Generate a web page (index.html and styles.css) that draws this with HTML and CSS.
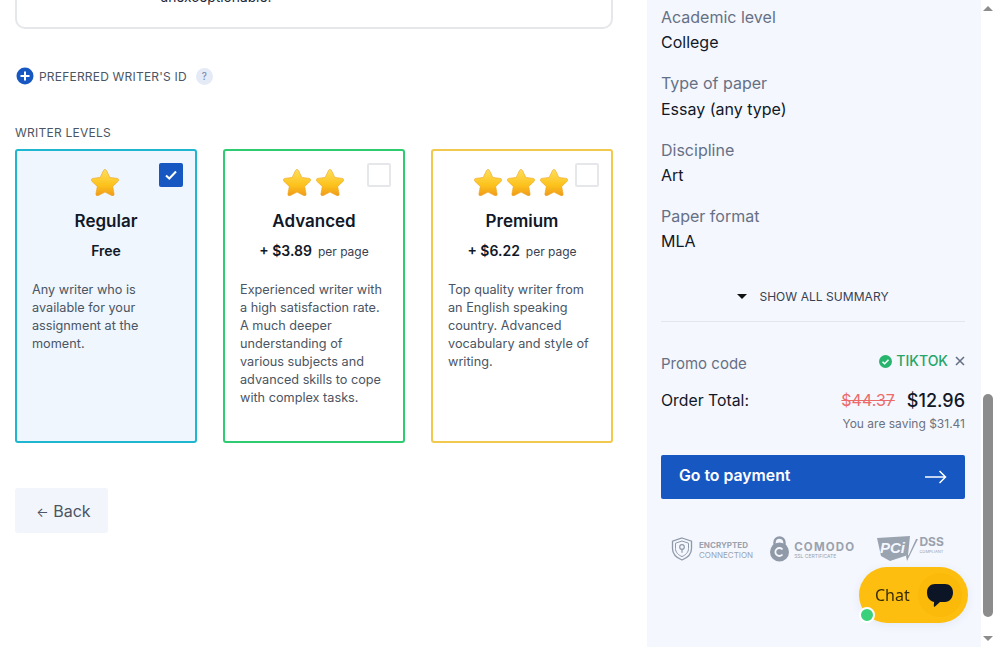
FILE: index.html
```html
<!DOCTYPE html>
<html lang="en">
<head>
    <meta charset="UTF-8">
    <title>Order</title>
    <link rel="stylesheet" href="styles.css">
</head>
<body>
    <svg width="0" height="0" class="defs">
        <defs>
            <linearGradient id="starFill" x1="0" y1="0" x2="0" y2="1">
                <stop offset="0" stop-color="#ffdf5c"/>
                <stop offset="0.6" stop-color="#fcc21b"/>
                <stop offset="1" stop-color="#f09a1a"/>
            </linearGradient>
            <symbol id="star" viewBox="0 0 28 28">
                <path d="M14 1.500c.7 0 1.200.4 1.500 1l3.300 6.900 7.500 1c1.400.2 1.900 1.900.9 2.800l-5.500 5.200 1.400 7.500c.2 1.400-1.200 2.400-2.400 1.700L14 24.100l-6.700 3.500c-1.200.7-2.600-.3-2.400-1.700l1.400-7.500L.8 13.200c-1-.9-.5-2.600.9-2.800l7.500-1 3.300-6.900c.3-.6.800-1 1.500-1z" fill="url(#starFill)" stroke="#eea11d" stroke-width=".6"/>
            </symbol>
        </defs>
    </svg>

    <div class="page">
        <main class="main">
            <div class="top-card"><p>unexceptionable.</p></div>

            <div class="writer-id">
                <span class="plus-icon">
                    <svg width="18" height="18" viewBox="0 0 18 18"><circle cx="9" cy="9" r="8.500" fill="#1757c2"/><path d="M9 4.500v9M4.500 9h9" stroke="#fff" stroke-width="2"/></svg>
                </span>
                <span>PREFERRED WRITER'S ID</span>
                <span class="help">?</span>
            </div>

            <h3 class="levels-title">WRITER LEVELS</h3>
            <div class="levels">
                <div class="level level-regular">
                    <span class="check checked">
                        <svg width="14" height="12" viewBox="0 0 14 12"><path d="M2 6.500l3.300 3L12 2.500" fill="none" stroke="#fff" stroke-width="2"/></svg>
                    </span>
                    <div class="stars"><svg class="star"><use href="#star"/></svg></div>
                    <h4>Regular</h4>
                    <div class="price"><b>Free</b></div>
                    <p>Any writer who is available for your assignment at the moment.</p>
                </div>
                <div class="level level-advanced">
                    <span class="check"></span>
                    <div class="stars"><svg class="star"><use href="#star"/></svg><svg class="star"><use href="#star"/></svg></div>
                    <h4>Advanced</h4>
                    <div class="price"><b>+ $3.89</b> <span>per page</span></div>
                    <p>Experienced writer with a high satisfaction rate. A much deeper understanding of various subjects and advanced skills to cope with complex tasks.</p>
                </div>
                <div class="level level-premium">
                    <span class="check"></span>
                    <div class="stars"><svg class="star"><use href="#star"/></svg><svg class="star"><use href="#star"/></svg><svg class="star"><use href="#star"/></svg></div>
                    <h4>Premium</h4>
                    <div class="price"><b>+ $6.22</b> <span>per page</span></div>
                    <p>Top quality writer from an English speaking country. Advanced vocabulary and style of writing.</p>
                </div>
            </div>

            <button class="back" type="button"><span class="back-arrow">←</span> Back</button>
        </main>

        <aside class="sidebar">
            <div class="summary">
                <div class="row"><div class="label">Academic level</div><div class="value">College</div></div>
                <div class="row"><div class="label">Type of paper</div><div class="value">Essay (any type)</div></div>
                <div class="row"><div class="label">Discipline</div><div class="value">Art</div></div>
                <div class="row"><div class="label">Paper format</div><div class="value">MLA</div></div>
            </div>

            <div class="show-all"><span class="caret"></span>SHOW ALL SUMMARY</div>

            <div class="promo">
                <span class="promo-label">Promo code</span>
                <span class="promo-code">
                    <svg width="13" height="13" viewBox="0 0 13 13"><circle cx="6.500" cy="6.500" r="6.500" fill="#27b56e"/><path d="M3.500 6.700l2.100 2 3.900-4" fill="none" stroke="#fff" stroke-width="1.500"/></svg>
                    TIKTOK
                    <svg class="promo-x" width="10" height="10" viewBox="0 0 10 10"><path d="M1 1l8 8M9 1l-8 8" stroke="#667085" stroke-width="1.600"/></svg>
                </span>
            </div>

            <div class="total">
                <span class="total-label">Order Total:</span>
                <span class="total-prices"><s>$44.37</s><b>$12.96</b></span>
            </div>
            <div class="saving">You are saving $31.41</div>

            <button class="pay" type="button">
                <span class="pay-text">Go to payment</span>
                <svg width="22" height="14" viewBox="0 0 22 14"><path d="M0 7h20.500M14.500 1l6 6-6 6" fill="none" stroke="#fff" stroke-width="1.500"/></svg>
            </button>

            <div class="badges">
                <div class="badge">
                    <svg width="22" height="24" viewBox="0 0 22 24"><path d="M11 1l9.500 3.200v7.300c0 5.500-4 9.300-9.500 11.500C5.500 20.800 1.500 17 1.500 11.500V4.200z" fill="none" stroke="#8f99a8" stroke-width="1.300"/><path d="M11 4l6.500 2.200v5.300c0 3.800-2.800 6.500-6.500 8.100-3.700-1.600-6.500-4.300-6.500-8.100V6.200z" fill="none" stroke="#8f99a8" stroke-width="1"/><circle cx="11" cy="10" r="2.300" fill="none" stroke="#8f99a8" stroke-width="1.200"/><path d="M11 12.300v3.500" stroke="#8f99a8" stroke-width="1.200"/></svg>
                    <div class="badge-text"><b>ENCRYPTED</b><span>CONNECTION</span></div>
                </div>
                <div class="badge comodo">
                    <svg width="21" height="26" viewBox="0 0 21 26"><path d="M5.500 10V6.500a5 5 0 0 1 10 0V10" fill="none" stroke="#8f99a8" stroke-width="2.400"/><circle cx="10.500" cy="16" r="9.500" fill="#8f99a8"/><path d="M13.500 13.500a4 4 0 1 0 0 5" fill="none" stroke="#f4f7fe" stroke-width="1.800"/></svg>
                    <div class="badge-text"><b>COMODO</b><span>SSL CERTIFICATE</span></div>
                </div>
                <div class="badge pci">
                    <svg width="42" height="26" viewBox="0 0 42 26"><path d="M0 2l33-2-2 19-18 6-9-5z" fill="#9aa3b0"/><path d="M41 3L30 25l-1-5 1.500-2 1 1.500L39 3z" fill="#9aa3b0"/><text x="3" y="17" class="pci-text">PCi</text></svg>
                    <div class="badge-text"><b>DSS</b><span>COMPLIANT</span></div>
                </div>
            </div>
        </aside>

        <div class="scrollbar">
            <span class="arrow-up"></span>
            <div class="thumb"></div>
            <span class="arrow-down"></span>
        </div>
    </div>

    <div class="chat">
        <span class="chat-text">Chat</span>
        <span class="chat-icon">
            <svg width="26" height="25" viewBox="0 0 26 25"><path d="M8 1h10c4.500 0 8 3 8 8.500S22.500 19 18 19h-5l-5 4.500c-.6.500-1.300.2-1.200-.6l.3-4C2.500 18 0 14.500 0 9.500 0 4 3.500 1 8 1z" fill="#0b1526"/></svg>
        </span>
        <span class="online"></span>
    </div>
</body>
</html>
```

FILE: styles.css
```css
* {
    box-sizing: border-box;
}
html, body {
    margin: 0;
    height: 647px;
    overflow: hidden;
    background: #fff;
}
body {
    font-family: Inter, "Liberation Sans", sans-serif;
    color: #111827;
}
.defs {
    display: block;
    height: 0;
}
.page {
    display: flex;
    height: 647px;
}
.main {
    width: 647px;
    padding: 0 34px 0 15px;
}
.top-card {
    height: 29px;
    border: 2px solid #e5e7eb;
    border-top: none;
    border-radius: 0 0 10px 10px;
    display: flex;
    align-items: flex-end;
    padding: 0 0 20px 143px;
}
.top-card p {
    margin: 0;
    font-size: 13.800px;
    line-height: 20px;
    color: #1f2937;
}
.writer-id {
    display: flex;
    align-items: center;
    margin: 37px 0 0 1px;
    height: 20px;
    font-size: 12px;
    letter-spacing: 0.2px;
    color: #4b5563;
}
.plus-icon {
    display: flex;
    margin-right: 5px;
}
.help {
    width: 17px;
    height: 17px;
    margin-left: 9px;
    border-radius: 50%;
    background: #e4eaf6;
    color: #6b82a8;
    font-size: 10px;
    text-align: center;
    line-height: 17px;
}
.levels-title {
    margin: 39px 0 0;
    font-size: 12px;
    line-height: 16px;
    font-weight: 400;
    letter-spacing: 0.25px;
    color: #4b5563;
}
.levels {
    display: flex;
    gap: 26px;
    margin-top: 8px;
}
.level {
    position: relative;
    width: 182px;
    height: 294px;
    border: 2px solid;
    border-radius: 3px;
    padding: 17px 15px 0;
    text-align: center;
}
.level-regular {
    border-color: #1fb6d0;
    background: #eff6fd;
}
.level-advanced {
    border-color: #2ecc71;
}
.level-premium {
    border-color: #f2c94c;
}
.check {
    position: absolute;
    top: 12px;
    right: 12px;
    width: 24px;
    height: 24px;
    border: 2px solid #e5e7eb;
    border-radius: 2px;
    display: flex;
    align-items: center;
    justify-content: center;
}
.checked {
    background: #1757c2;
    border-color: #1757c2;
}
.stars {
    display: flex;
    justify-content: center;
    gap: 5px;
    height: 30px;
    padding-right: 2px;
}
.star {
    width: 28px;
    height: 28px;
}
.level h4 {
    margin: 11px 0 0;
    font-size: 17px;
    line-height: 24px;
    font-weight: 600;
    color: #111827;
}
.price {
    height: 20px;
    margin-top: 8px;
    font-size: 14px;
    line-height: 20px;
}
.price b {
    font-weight: 600;
}
.price span {
    margin-left: 2px;
    font-size: 12px;
    color: #374151;
}
.level p {
    margin: 20px 0 0;
    width: 146px;
    text-align: left;
    font-size: 12.700px;
    line-height: 18px;
    color: #4b5563;
}
.back {
    display: block;
    margin-top: 45px;
    width: 93px;
    height: 45px;
    padding-left: 10px;
    border: none;
    border-radius: 3px;
    background: #f2f5fb;
    font-family: inherit;
    font-size: 16px;
    color: #4b5563;
}
.back-arrow {
    font-size: 13px;
}
.sidebar {
    width: 334px;
    padding: 0 16px 0 14px;
    background: #f4f7fe;
}
.summary {
    padding-top: 5px;
}
.row {
    height: 66.400px;
    font-size: 16px;
    line-height: 25px;
}
.label {
    color: #667085;
}
.value {
    margin-top: 0.2px;
    color: #111827;
}
.show-all {
    display: flex;
    justify-content: center;
    align-items: center;
    height: 51px;
    margin-top: 0.700px;
    border-bottom: 1px solid #e2e7ef;
    font-size: 12px;
    letter-spacing: 0.05px;
    color: #374151;
}
.caret {
    width: 0;
    height: 0;
    margin-right: 12px;
    border-left: 5px solid transparent;
    border-right: 5px solid transparent;
    border-top: 5px solid #111;
}
.promo {
    display: flex;
    justify-content: space-between;
    height: 24px;
    margin-top: 30px;
    font-size: 15px;
    line-height: 24px;
}
.promo-label {
    color: #667085;
}
.promo-code {
    display: flex;
    align-items: center;
    gap: 4px;
    margin-top: -6px;
    font-size: 14px;
    font-weight: 500;
    color: #27a567;
}
.promo-x {
    margin-left: 3px;
}
.total {
    display: flex;
    justify-content: space-between;
    align-items: center;
    margin-top: 11px;
    height: 26px;
}
.total-label {
    font-size: 15.800px;
}
.total-prices {
    display: flex;
    align-items: center;
    gap: 12px;
}
.total-prices s {
    font-size: 16px;
    color: #eb6b6b;
}
.total-prices b {
    font-size: 18px;
    font-weight: 500;
    color: #111827;
}
.saving {
    margin-top: 3px;
    text-align: right;
    font-size: 12px;
    line-height: 16px;
    color: #6b7280;
}
.pay {
    display: flex;
    justify-content: space-between;
    align-items: center;
    width: 100%;
    height: 44px;
    margin-top: 22.600px;
    padding: 0 18px;
    border: none;
    border-radius: 2px;
    background: #1757c2;
    color: #fff;
    font-family: inherit;
    font-size: 15.800px;
    font-weight: 600;
}
.pay-text {
    padding-bottom: 2px;
}
.badges {
    display: flex;
    align-items: center;
    margin: 32px 0 0 10px;
    height: 36px;
    color: #9aa2ae;
}
.badge {
    display: flex;
    align-items: center;
    gap: 6px;
}
.badge-text {
    display: flex;
    flex-direction: column;
    padding-top: 2px;
    font-size: 8px;
    line-height: 10px;
}
.badge-text b {
    font-weight: 700;
}
.comodo {
    margin-left: 16px;
    gap: 4px;
}
.comodo .badge-text b {
    font-size: 11.500px;
    letter-spacing: 1.200px;
    line-height: 12px;
}
.comodo .badge-text span {
    font-size: 5px;
    line-height: 6px;
}
.pci {
    margin-left: 22px;
    gap: 0;
}
.pci-text {
    font-family: "Liberation Sans", sans-serif;
    font-size: 15px;
    font-style: italic;
    font-weight: 700;
    fill: #f4f7fe;
}
.pci .badge-text {
    padding: 0 0 8px;
}
.pci .badge-text b {
    font-size: 12px;
    line-height: 14px;
}
.pci .badge-text span {
    font-size: 4px;
    line-height: 6px;
}
.scrollbar {
    position: relative;
    width: 14px;
    background: #fff;
}
.thumb {
    position: absolute;
    top: 394px;
    left: 2px;
    width: 10px;
    height: 223px;
    border-radius: 5px;
    background: #8c8c8c;
}
.arrow-up, .arrow-down {
    position: absolute;
    left: 2px;
    width: 0;
    height: 0;
    border-left: 5px solid transparent;
    border-right: 5px solid transparent;
}
.arrow-up {
    top: 6px;
    border-bottom: 5px solid #8c8c8c;
}
.arrow-down {
    bottom: 6px;
    border-top: 5px solid #8c8c8c;
}
.chat {
    position: fixed;
    left: 859px;
    top: 567px;
    width: 109px;
    height: 56px;
    border-radius: 28px;
    background: #fdbe10;
    display: flex;
    align-items: center;
    justify-content: space-between;
    padding: 0 6px 0 16px;
    box-shadow: 0 2px 10px rgba(40, 60, 100, 0.08);
}
.chat-text {
    font-family: "Noto Sans", sans-serif;
    font-size: 16px;
    color: #3a2d00;
}
.chat-icon {
    width: 44px;
    height: 44px;
    border-radius: 50%;
    background: #fbb90a;
    display: flex;
    align-items: center;
    justify-content: center;
}
.online {
    position: absolute;
    left: 0;
    bottom: 0;
    width: 16px;
    height: 16px;
    border: 2px solid #fff;
    border-radius: 50%;
    background: #3bd07c;
}
```
